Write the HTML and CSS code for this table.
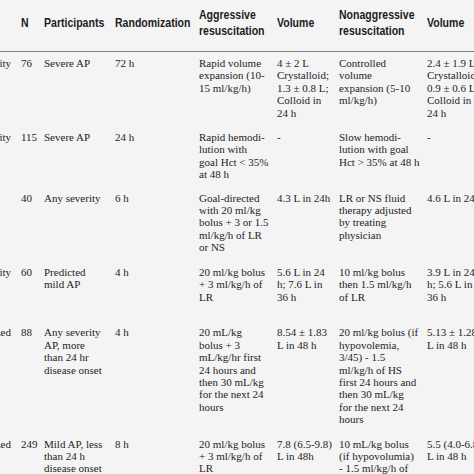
FILE: index.html
```html
<!DOCTYPE html>
<html>
<head>
<meta charset="utf-8">
<link rel="stylesheet" href="styles.css">
</head>
<body>
<table class="trials">
  <colgroup>
    <col class="c-study"><col class="c-n"><col class="c-part"><col class="c-rand"><col class="c-agg"><col class="c-vol"><col class="c-non"><col class="c-vol2">
  </colgroup>
  <thead>
    <tr>
      <th></th>
      <th><span class="hd">N</span></th>
      <th><span class="hd">Participants</span></th>
      <th><span class="hd">Randomization</span></th>
      <th><span class="hd">Aggressive<br>resuscitation</span></th>
      <th><span class="hd">Volume</span></th>
      <th><span class="hd">Nonaggressive<br>resuscitation</span></th>
      <th><span class="hd">Volume</span></th>
    </tr>
  </thead>
  <tbody>
    <tr>
      <td><div class="lead">Any severity</div></td>
      <td>76</td>
      <td>Severe AP</td>
      <td>72 h</td>
      <td>Rapid volume<br>expansion (10-<br>15 ml/kg/h)</td>
      <td>4 ± 2 L<br>Crystalloid;<br>1.3 ± 0.8 L;<br>Colloid in<br>24 h</td>
      <td>Controlled<br>volume<br>expansion (5-10<br>ml/kg/h)</td>
      <td>2.4 ± 1.9 L<br>Crystalloid;<br>0.9 ± 0.6 L;<br>Colloid in<br>24 h</td>
    </tr>
    <tr class="short">
      <td><div class="lead">Any severity</div></td>
      <td>115</td>
      <td>Severe AP</td>
      <td>24 h</td>
      <td>Rapid hemodi-<br>lution with<br>goal Hct &lt; 35%<br>at 48 h</td>
      <td>-</td>
      <td>Slow hemodi-<br>lution with goal<br>Hct &gt; 35% at 48 h</td>
      <td>-</td>
    </tr>
    <tr>
      <td><div class="lead"></div></td>
      <td>40</td>
      <td>Any severity</td>
      <td>6 h</td>
      <td>Goal-directed<br>with 20 ml/kg<br>bolus + 3 or 1.5<br>ml/kg/h of LR<br>or NS</td>
      <td>4.3 L in 24h</td>
      <td>LR or NS fluid<br>therapy adjusted<br>by treating<br>physician</td>
      <td>4.6 L in 24h</td>
    </tr>
    <tr class="short">
      <td><div class="lead">Mild severity</div></td>
      <td>60</td>
      <td>Predicted<br>mild AP</td>
      <td>4 h</td>
      <td>20 ml/kg bolus<br>+ 3 ml/kg/h of<br>LR</td>
      <td>5.6 L in 24<br>h; 7.6 L in<br>36 h</td>
      <td>10 ml/kg bolus<br>then 1.5 ml/kg/h<br>of LR</td>
      <td>3.9 L in 24<br>h; 5.6 L in<br>36 h<br>&nbsp;</td>
    </tr>
    <tr>
      <td><div class="lead">Randomized</div></td>
      <td>88</td>
      <td>Any severity<br>AP, more<br>than 24 hr<br>disease onset</td>
      <td>4 h</td>
      <td>20 mL/kg<br>bolus + 3<br>mL/kg/hr first<br>24 hours and<br>then 30 mL/kg<br>for the next 24<br>hours</td>
      <td>8.54 ± 1.83<br>L in 48 h</td>
      <td>20 ml/kg bolus (if<br>hypovolemia,<br>3/45) - 1.5<br>ml/kg/h of HS<br>first 24 hours and<br>then 30 mL/kg<br>for the next 24<br>hours</td>
      <td>5.13 ± 1.28<br>L in 48 h</td>
    </tr>
    <tr>
      <td><div class="lead">Randomized</div></td>
      <td>249</td>
      <td>Mild AP, less<br>than 24 h<br>disease onset</td>
      <td>8 h</td>
      <td>20 ml/kg bolus<br>+ 3 ml/kg/h of<br>LR</td>
      <td>7.8 (6.5-9.8)<br>L in 48h</td>
      <td>10 mL/kg bolus<br>(if hypovolumia)<br>- 1.5 ml/kg/h of<br>LR</td>
      <td>5.5 (4.0-6.8)<br>L in 48 h</td>
    </tr>
  </tbody>
</table>
</body>
</html>
```

FILE: styles.css
```css
html, body {
  margin: 0;
  padding: 0;
  overflow: hidden;
  background: #f4f4f4;
}

body {
  width: 474px;
  height: 474px;
}

.trials {
  border-collapse: collapse;
  table-layout: fixed;
  width: 498px;
  font-family: "Liberation Serif", "Times New Roman", serif;
  font-size: 11px;
  line-height: 12.4px;
  color: #242424;
}

.c-study { width: 21px; }
.c-n { width: 23px; }
.c-part { width: 71px; }
.c-rand { width: 84px; }
.c-agg { width: 78px; }
.c-vol { width: 62px; }
.c-non { width: 88px; }
.c-vol2 { width: 71px; }

.trials th {
  font-family: "Liberation Sans", Arial, sans-serif;
  font-weight: bold;
  font-size: 13px;
  line-height: 16px;
  color: #1c1c1c;
  text-align: left;
  vertical-align: middle;
  white-space: nowrap;
  padding: 7px 0 12px;
  border-bottom: 1px solid #7c7c7c;
}

.hd {
  display: inline-block;
  transform: scaleX(0.81);
  transform-origin: 0 50%;
}

.trials td {
  padding: 5px 0 7px;
  vertical-align: top;
  text-align: left;
  white-space: nowrap;
}

.trials tr.short td {
  padding-bottom: 6px;
}

.lead {
  width: 11px;
  display: flex;
  justify-content: flex-end;
  white-space: nowrap;
}
```
